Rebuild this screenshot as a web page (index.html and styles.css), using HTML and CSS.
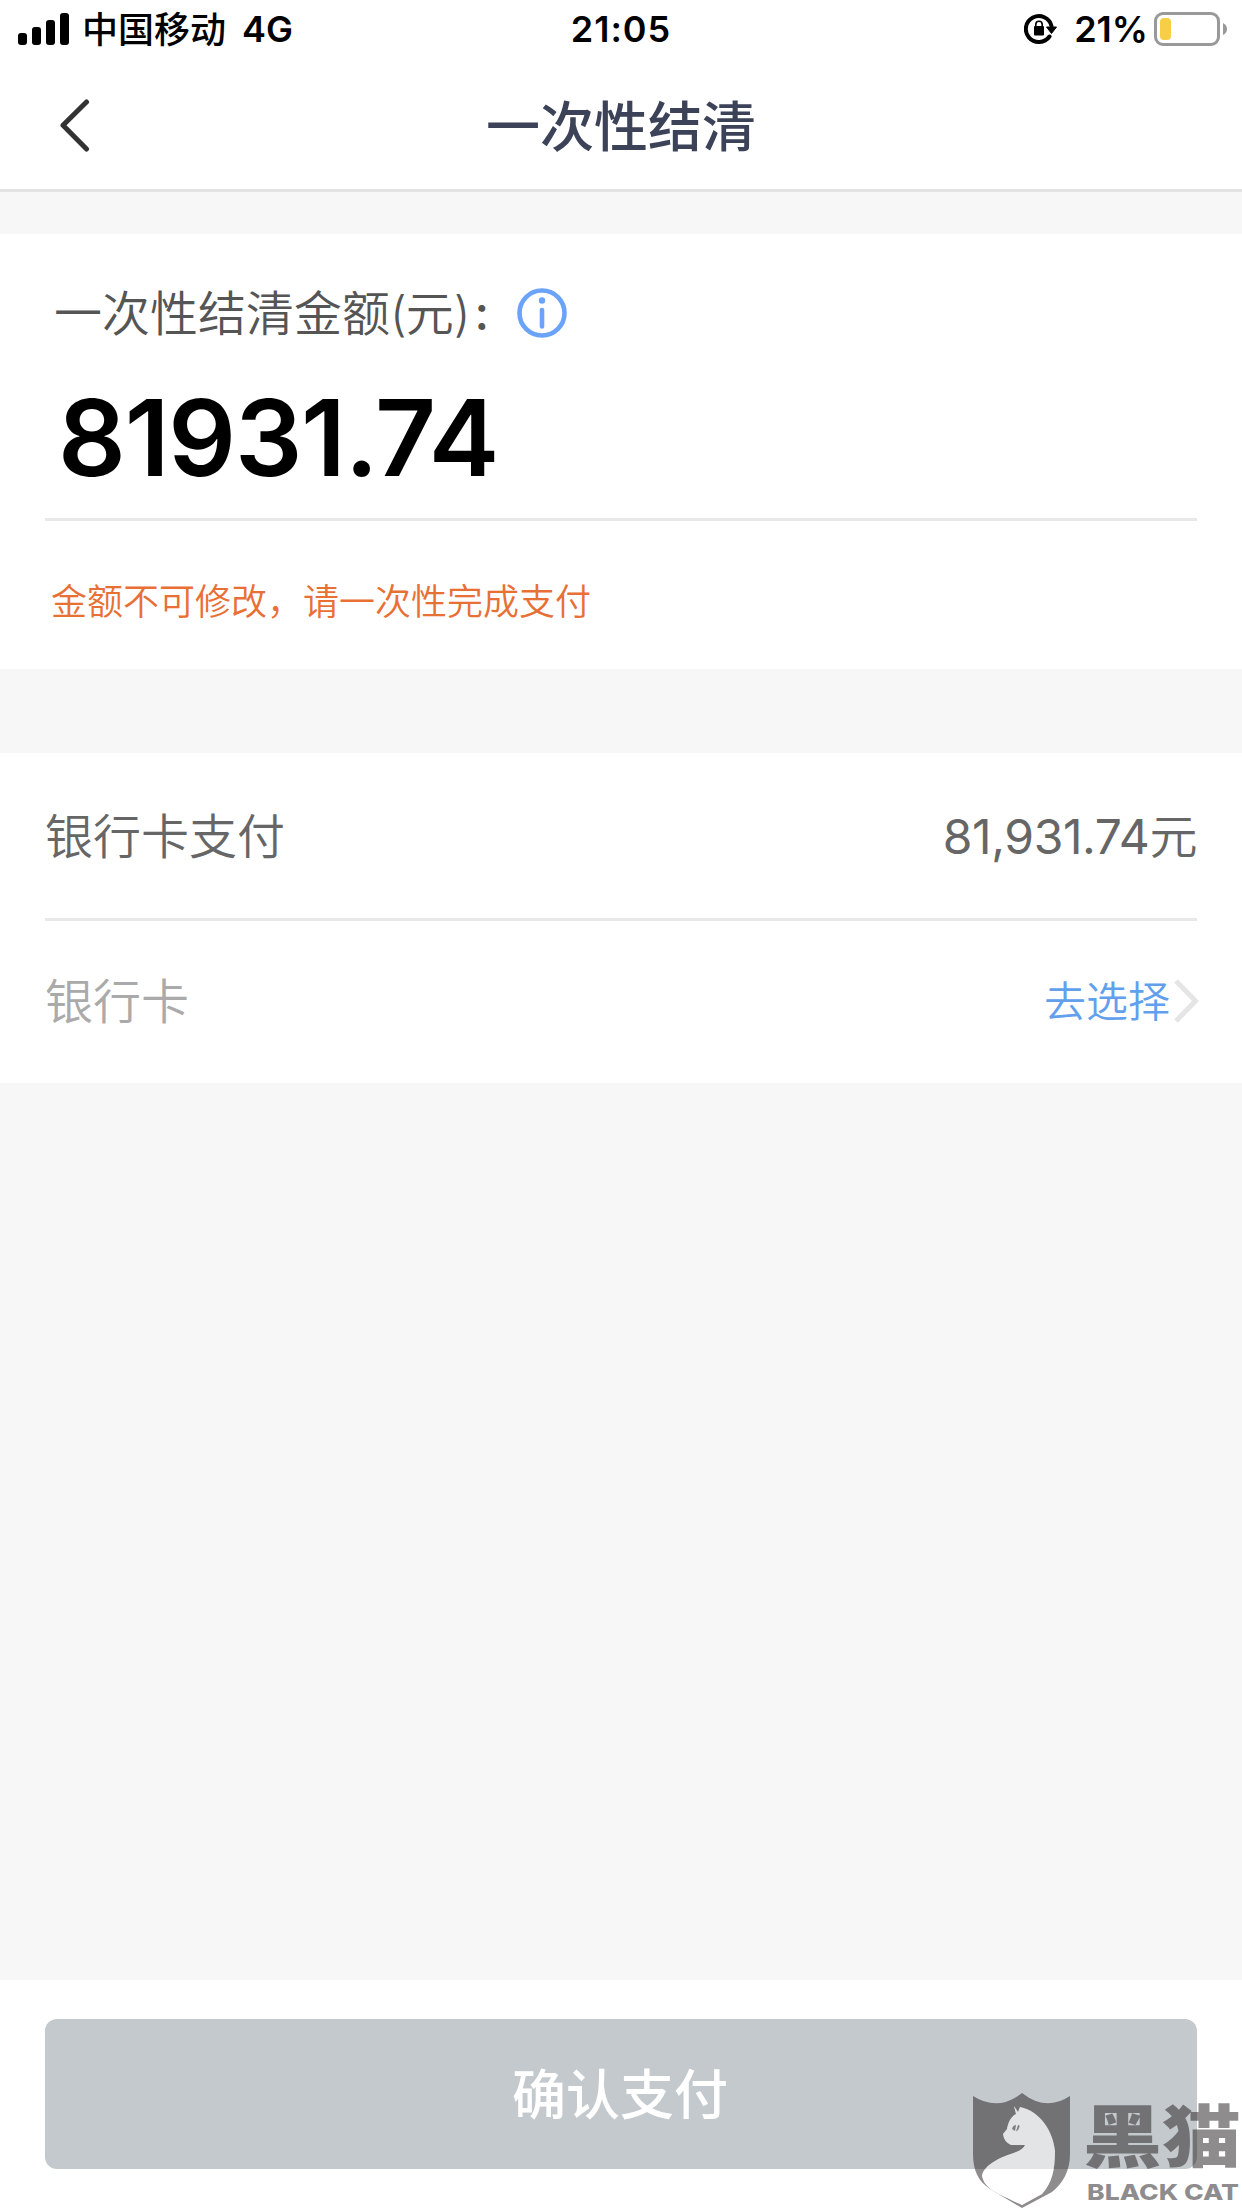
FILE: index.html
```html
<!DOCTYPE html>
<html lang="zh">
<head>
    <meta charset="UTF-8">
    <meta name="viewport" content="width=device-width, initial-scale=1.0">
    <title>一次性结清</title>
    <link rel="stylesheet" href="styles.css">
</head>
<body>
    <div class="page">
        <div class="status-bar">
            <div class="status-left">
                <svg class="signal" width="51" height="32" viewBox="0 0 51 32">
                    <rect x="0" y="20" width="9" height="12" rx="3"/>
                    <rect x="14" y="14" width="9" height="18" rx="3"/>
                    <rect x="28" y="7" width="9" height="25" rx="3"/>
                    <rect x="42" y="0" width="9" height="32" rx="3"/>
                </svg>
                <span class="carrier">中国移动</span>
                <span class="network">4G</span>
            </div>
            <div class="time">21:05</div>
            <div class="status-right">
                <svg class="lock" width="34" height="32" viewBox="0 0 34 32">
                    <path d="M25.5 23.5 A13 13 0 1 1 27.500 13" fill="none" stroke="#000" stroke-width="4" stroke-linecap="round"/>
                    <path d="M22.500 14h10l-5 6.500z" stroke="#000" stroke-linejoin="round"/>
                    <rect x="10" y="13" width="10" height="9.500" rx="1"/>
                    <path d="M11.800 14v-2.500a3.200 3.200 0 0 1 6.400 0V14" fill="none" stroke="#000" stroke-width="1.600"/>
                </svg>
                <span class="percent">21%</span>
                <svg class="battery" width="74" height="34" viewBox="0 0 74 34">
                    <rect x="1.500" y="1.500" width="63" height="31" rx="7.500" fill="none" stroke="#999" stroke-width="3"/>
                    <rect x="6" y="6" width="11" height="22" rx="4" fill="#f8ce46"/>
                    <path d="M69 11q4 2 4 6t-4 6z" fill="#999"/>
                </svg>
            </div>
        </div>

        <div class="nav">
            <svg class="back" width="32" height="54" viewBox="0 0 32 54">
                <path d="M28.500 4 L5 27.300 L28.500 51" fill="none" stroke="#333" stroke-width="5" stroke-linecap="round" stroke-linejoin="round"/>
            </svg>
            <h1 class="title">一次性结清</h1>
        </div>

        <div class="box amount-box">
            <div class="label">
                <span class="label-text">一次性结清金额<span class="paren">(</span>元<span class="paren">)</span></span><span class="colon">:</span>
                <svg class="info" width="52" height="52" viewBox="0 0 52 52">
                    <circle cx="26" cy="26" r="22.500" fill="none" stroke="#6ba3fa" stroke-width="4.600"/>
                    <circle cx="26" cy="13.500" r="3.200" fill="#6ba3fa"/>
                    <path d="M26 23v16.500" stroke="#6ba3fa" stroke-width="4.600" stroke-linecap="round"/>
                </svg>
            </div>
            <div class="amount">81931.74</div>
            <p class="tip">金额不可修改，请一次性完成支付</p>
        </div>

        <div class="box pay-box">
            <div class="row row-pay">
                <span>银行卡支付</span>
                <span class="money">81,931.74<span class="unit">元</span></span>
            </div>
            <div class="row row-card">
                <span>银行卡</span>
                <a class="choose">去选择<svg class="arrow" width="26" height="44" viewBox="0 0 26 44">
                    <path d="M3 2 L22.500 22 L3 42" fill="none" stroke="#e5e5e5" stroke-width="5"/>
                </svg></a>
            </div>
        </div>

        <div class="footer">
            <button class="confirm">确认支付</button>
        </div>

        <svg class="watermark" width="272" height="120" viewBox="0 0 272 120">
            <path class="mark" fill-rule="evenodd" d="M3 8 Q28 24 52 5 Q76 24 100 8 V66 C100 83 93 95 82 104 L52 120 L20 101 C8 93 3 82 3 66 Z M12 88 C15 100 22 103 52 117 L72 106 C82 95 85 82 85 63 C83 43 70 23 50 19 L48 24 L44 18 L46 26 C40 29 38 36 37 41 L33 46 Q34 54 41 57 H55 C52 65 37 65 25 73 C17 78 13 82 12 88 Z"/>
            <path class="cat" d="M12 88 C15 100 22 103 52 117 L72 106 C82 95 85 82 85 63 C83 43 70 23 50 19 L48 24 L44 18 L46 26 C40 29 38 36 37 41 L33 46 Q34 54 41 57 H55 C52 65 37 65 25 73 C17 78 13 82 12 88 Z"/>
            <path class="mark" d="M42 41q1-4 4-4l-1 6zM48 37l1.500 .5q0 4-3.500 6z"/>
            <text class="mark brand-cn" x="113" y="74" textLength="158" lengthAdjust="spacingAndGlyphs">黑猫</text>
            <text class="mark brand-en" x="117" y="112" textLength="152" lengthAdjust="spacingAndGlyphs">BLACK CAT</text>
        </svg>
    </div>
</body>
</html>
```
FILE: styles.css
```css
* {
    box-sizing: border-box;
}

body {
    margin: 0;
    background: #f7f7f7;
    font-family: Inter, "Noto Sans CJK SC", sans-serif;
}

.page {
    position: relative;
    display: flex;
    flex-direction: column;
    width: 1242px;
    height: 2208px;
    overflow: hidden;
}

.status-bar {
    display: grid;
    grid-template-columns: 1fr auto 1fr;
    align-items: center;
    height: 60px;
    padding: 0 14px 2px 18px;
    background: #fff;
    color: #000;
    font-size: 36px;
    font-weight: 600;
    line-height: 56px;
}

.status-left, .status-right {
    display: flex;
    align-items: center;
}

.status-right {
    justify-content: flex-end;
}

.carrier {
    margin-left: 13px;
    padding-top: 2px;
    font-weight: 500;
}

.network {
    margin-left: 16px;
}

.time {
    margin-right: 4px;
    letter-spacing: 1px;
}

.percent {
    margin: 0 6px 0 16px;
}

.nav {
    display: grid;
    grid-template-columns: 100px 1fr 100px;
    align-items: center;
    height: 132px;
    background: #fff;
    border-bottom: 3px solid #e3e3e3;
}

.back {
    margin-left: 58px;
}

.title {
    margin: 0;
    padding-top: 6px;
    color: #3c4257;
    font-size: 54px;
    font-weight: 500;
    line-height: 80px;
    text-align: center;
}

.box {
    background: #fff;
}

.amount-box {
    height: 435px;
    margin-top: 42px;
    padding: 43px 45px 0;
}

.label {
    display: flex;
    align-items: center;
    height: 72px;
    padding-left: 9px;
    color: #555;
    font-size: 48px;
    font-weight: 350;
    line-height: 72px;
}

.label-text {
    padding-top: 2px;
}

.paren {
    letter-spacing: -1px;
}

.colon {
    margin-left: 5px;
    font-weight: 500;
}

.info {
    margin-left: 27px;
}

.amount {
    height: 172px;
    padding-left: 13px;
    border-bottom: 3px solid #e8e8e8;
    color: #000;
    font-size: 106px;
    font-weight: 600;
    line-height: 178px;
    letter-spacing: -1.2px;
}

.tip {
    margin: 51px 0 0 6px;
    color: #e87035;
    font-size: 36px;
    font-weight: 350;
    line-height: 60px;
}

.pay-box {
    height: 330px;
    margin-top: 84px;
    padding: 0 45px;
}

.row {
    display: flex;
    justify-content: space-between;
    align-items: center;
    font-size: 48px;
    font-weight: 350;
    line-height: 72px;
}

.row-pay {
    height: 168px;
    padding-top: 2px;
    border-bottom: 3px solid #e8e8e8;
    color: #666;
}

.money {
    font-weight: 400;
    letter-spacing: -0.4px;
}

.unit {
    font-weight: 350;
}

.row-card {
    height: 162px;
    color: #aaa;
}

.choose {
    display: flex;
    align-items: center;
    color: #629fec;
    font-size: 42px;
}

.arrow {
    margin: -2px -2px 0 3px;
}

.footer {
    height: 228px;
    margin-top: auto;
    padding: 39px 45px;
    background: #fff;
}

.confirm {
    width: 100%;
    height: 150px;
    padding: 0 2px 6px 0;
    border: none;
    border-radius: 12px;
    background: #c4c9cd;
    color: #fff;
    font-family: inherit;
    font-size: 54px;
    font-weight: 500;
}

.watermark {
    position: absolute;
    right: 0;
    bottom: 0;
    overflow: visible;
}

.mark {
    fill: rgba(32, 26, 28, 0.5);
}

.cat {
    fill: rgba(255, 255, 255, 0.5);
}

.brand-cn {
    font-family: "Noto Sans CJK SC", sans-serif;
    font-size: 68px;
    font-weight: 900;
}

.brand-en {
    font-family: Inter, sans-serif;
    font-size: 22px;
    font-weight: 800;
}
```
